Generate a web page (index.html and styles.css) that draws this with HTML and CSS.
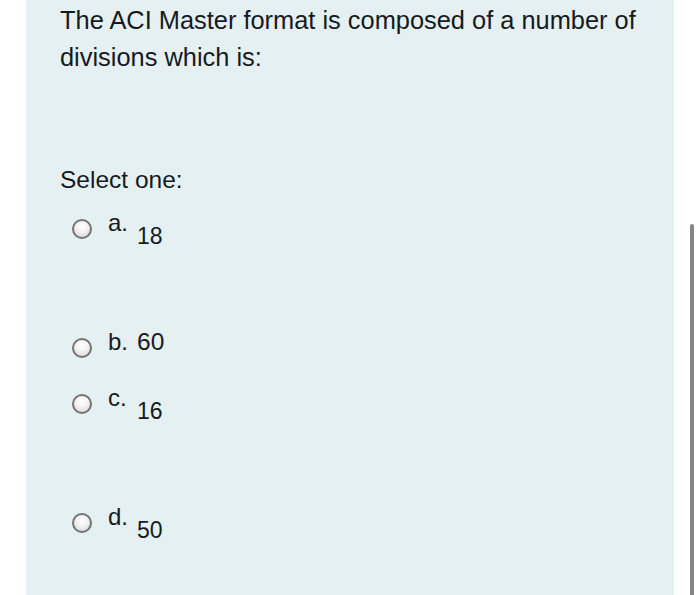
FILE: index.html
```html
<!DOCTYPE html>
<html lang="en">
<head>
<meta charset="utf-8">
<title>Question</title>
<link rel="stylesheet" href="styles.css">
</head>
<body>
<div class="page">
  <div class="card">
    <div class="question">The ACI Master format is composed of a number of divisions which is:</div>
    <div class="prompt">Select one:</div>
    <div class="answers">
      <div class="option shifted">
        <span class="radio"></span>
        <span class="letter">a.</span>
        <span class="value low">18</span>
      </div>
      <div class="option">
        <span class="radio"></span>
        <span class="letter">b.</span>
        <span class="value">60</span>
      </div>
      <div class="option shifted">
        <span class="radio"></span>
        <span class="letter">c.</span>
        <span class="value low">16</span>
      </div>
      <div class="option shifted">
        <span class="radio"></span>
        <span class="letter">d.</span>
        <span class="value low">50</span>
      </div>
    </div>
  </div>
  <div class="scrollbar"></div>
</div>
</body>
</html>
```

FILE: styles.css
```css
html, body {
  margin: 0;
  padding: 0;
  background: #ffffff;
}
body {
  height: 595px;
  overflow: hidden;
  font-family: "Liberation Sans", Arial, sans-serif;
  color: #161a1d;
}
.page {
  position: relative;
  height: 595px;
}
.card {
  margin-left: 26px;
  width: 648px;
  min-height: 640px;
  background: #e5f0f3;
  padding: 2px 0 0 34px;
  box-sizing: border-box;
}
.question {
  font-size: 25.4px;
  line-height: 37px;
  width: 610px;
}
.prompt {
  margin-top: 85px;
  font-size: 24.5px;
  line-height: 37px;
}
.answers {
  margin-top: 10px;
  display: flex;
  flex-direction: column;
}
.option {
  display: flex;
  align-items: flex-start;
  font-size: 24px;
  line-height: 30px;
  margin-bottom: 25px;
}
.option.shifted {
  margin-bottom: 76px;
}
.radio {
  width: 20px;
  height: 20px;
  box-sizing: border-box;
  border-radius: 50%;
  border: 2px solid #737373;
  background: radial-gradient(circle at 50% 35%, #ffffff 0%, #f3f3f3 40%, #d2d2d2 100%);
  margin: 11px 16px 0 12px;
  flex: none;
}
.letter {
  width: 29px;
  flex: none;
}
.value {
  font-size: 24.5px;
}
.value.low {
  font-size: 23px;
  margin-top: 13px;
}
.scrollbar {
  position: absolute;
  left: 690px;
  top: 224px;
  width: 4px;
  height: 400px;
  border-radius: 2px;
  background: #878787;
}
```
